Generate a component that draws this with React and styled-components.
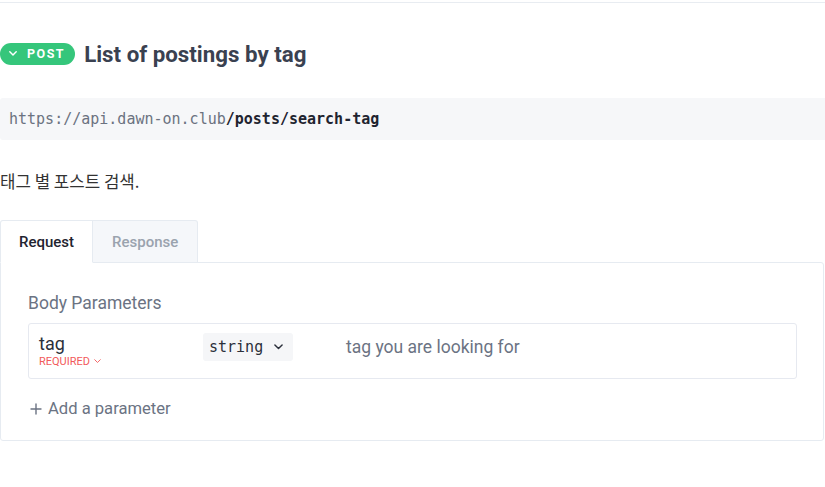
import React from "react";
import styled, { createGlobalStyle } from "styled-components";

const GlobalStyle = createGlobalStyle`
  html, body {
    margin: 0;
    padding: 0;
    background: #fff;
  }
  body {
    font-family: Roboto, "Noto Sans", "Noto Sans CJK KR", sans-serif;
    overflow: hidden;
  }
`;

const Page = styled.div`
  width: 825px;
  padding-top: 2px;
`;

const Divider = styled.div`
  height: 1px;
  background: #e8ecf1;
`;

const Header = styled.div`
  display: flex;
  align-items: center;
  gap: 9px;
  margin-top: 39px;
  height: 23px;
`;

const MethodBadge = styled.span`
  display: inline-flex;
  align-items: center;
  gap: 10px;
  height: 22px;
  padding: 0 10px 0 9px;
  border-radius: 11px;
  background: #35c67b;
  color: #fff;
  font-family: Roboto, sans-serif;
  font-weight: 700;
  font-size: 12.5px;
  letter-spacing: 1.5px;
`;

const Title = styled.h2`
  margin: 0;
  font-family: Roboto, sans-serif;
  font-size: 22.3px;
  font-weight: 700;
  color: #3a4150;
`;

const Endpoint = styled.div`
  margin-top: 33px;
  height: 42px;
  display: flex;
  align-items: center;
  padding-left: 9px;
  background: #f6f7f9;
  border-radius: 3px 0 0 3px;
  font-family: "DejaVu Sans Mono", "Liberation Mono", monospace;
  font-size: 15px;
  color: #6b7280;
`;

const Path = styled.span`
  color: #1f2430;
  font-weight: 700;
`;

const Description = styled.p`
  margin: 29px 0 0;
  font-family: "Noto Sans CJK KR", "Noto Sans", sans-serif;
  font-size: 16.8px;
  line-height: 24px;
  color: #333;
`;

const Tabs = styled.div`
  display: flex;
  margin-top: 27px;
`;

const Tab = styled.div`
  height: 41px;
  display: flex;
  align-items: center;
  padding: 0 ${(p) => p.$pad}px;
  border: 1px solid #e6ebf1;
  border-bottom: ${(p) => (p.$active ? "1px solid #fff" : "1px solid #e6ebf1")};
  border-left: ${(p) => (p.$active ? "1px solid #e6ebf1" : "none")};
  border-radius: ${(p) => (p.$active ? "3px 0 0 0" : "0 3px 0 0")};
  background: ${(p) => (p.$active ? "#fff" : "#f5f7fa")};
  color: ${(p) => (p.$active ? "#1f2430" : "#9aa3ae")};
  font-size: 15px;
  font-weight: 500;
  margin-bottom: -1px;
  position: relative;
  z-index: 1;
`;

const Panel = styled.div`
  width: 824px;
  box-sizing: border-box;
  border: 1px solid #e6ebf1;
  border-radius: 0 3px 3px 3px;
  padding: 28px 26px 20px 27px;
`;

const SectionLabel = styled.div`
  font-size: 17.5px;
  line-height: 24px;
  color: #6b7383;
`;

const ParamRow = styled.div`
  margin-top: 8px;
  height: 56px;
  box-sizing: border-box;
  border: 1px solid #e6e9f0;
  border-radius: 3px;
  display: grid;
  grid-template-columns: 164px 143px 1fr;
  align-items: start;
  padding-left: 10px;
`;

const NameCell = styled.div`
  display: flex;
  flex-direction: column;
  margin-top: 9px;
`;

const ParamName = styled.span`
  font-size: 18px;
  line-height: 21px;
  color: #2b303b;
`;

const Required = styled.span`
  display: flex;
  align-items: center;
  gap: 4px;
  margin-top: 1px;
  font-size: 11px;
  line-height: 13px;
  color: #f25a5a;
`;

const TypeSelect = styled.div`
  justify-self: start;
  display: inline-flex;
  align-items: center;
  gap: 11px;
  height: 28px;
  margin-top: 9px;
  padding: 0 10px 0 6px;
  border-radius: 3px;
  background: #f5f6f8;
  font-family: "DejaVu Sans Mono", "Liberation Mono", monospace;
  font-size: 15px;
  color: #2b303b;
`;

const ParamDesc = styled.span`
  font-size: 17.5px;
  line-height: 24px;
  color: #6b7383;
  margin-top: 11px;
`;

const AddParam = styled.div`
  margin-top: 19px;
  display: flex;
  align-items: center;
  gap: 6px;
  padding-left: 2px;
  font-size: 16.6px;
  line-height: 22px;
  color: #6b7383;
`;

const Chevron = ({ size = 8, color = "currentColor", width = 1.6 }) => (
  <svg width={size} height={size * 0.6} viewBox="0 0 10 6" fill="none">
    <path d="M1 1l4 4 4-4" stroke={color} strokeWidth={width} strokeLinecap="round" strokeLinejoin="round" />
  </svg>
);

const Plus = () => (
  <svg width="12" height="12" viewBox="0 0 12 12" fill="none">
    <path d="M6 1v10M1 6h10" stroke="#6b7383" strokeWidth="1.4" strokeLinecap="round" />
  </svg>
);

export default function App() {
  return (
    <Page>
      <GlobalStyle />
      <Divider />
      <Header>
        <MethodBadge>
          <Chevron size={8} color="#fff" width={1.8} />
          POST
        </MethodBadge>
        <Title>List of postings by tag</Title>
      </Header>

      <Endpoint>
        https://api.dawn-on.club<Path>/posts/search-tag</Path>
      </Endpoint>

      <Description>태그 별 포스트 검색.</Description>

      <Tabs>
        <Tab $active $pad={18}>Request</Tab>
        <Tab $pad={19}>Response</Tab>
      </Tabs>
      <Panel>
        <SectionLabel>Body Parameters</SectionLabel>
        <ParamRow>
          <NameCell>
            <ParamName>tag</ParamName>
            <Required>
              REQUIRED
              <Chevron size={7} color="#f25a5a" width={1.3} />
            </Required>
          </NameCell>
          <TypeSelect>
            string
            <Chevron size={9} color="#2b303b" width={1.6} />
          </TypeSelect>
          <ParamDesc>tag you are looking for</ParamDesc>
        </ParamRow>
        <AddParam>
          <Plus />
          Add a parameter
        </AddParam>
      </Panel>
    </Page>
  );
}
